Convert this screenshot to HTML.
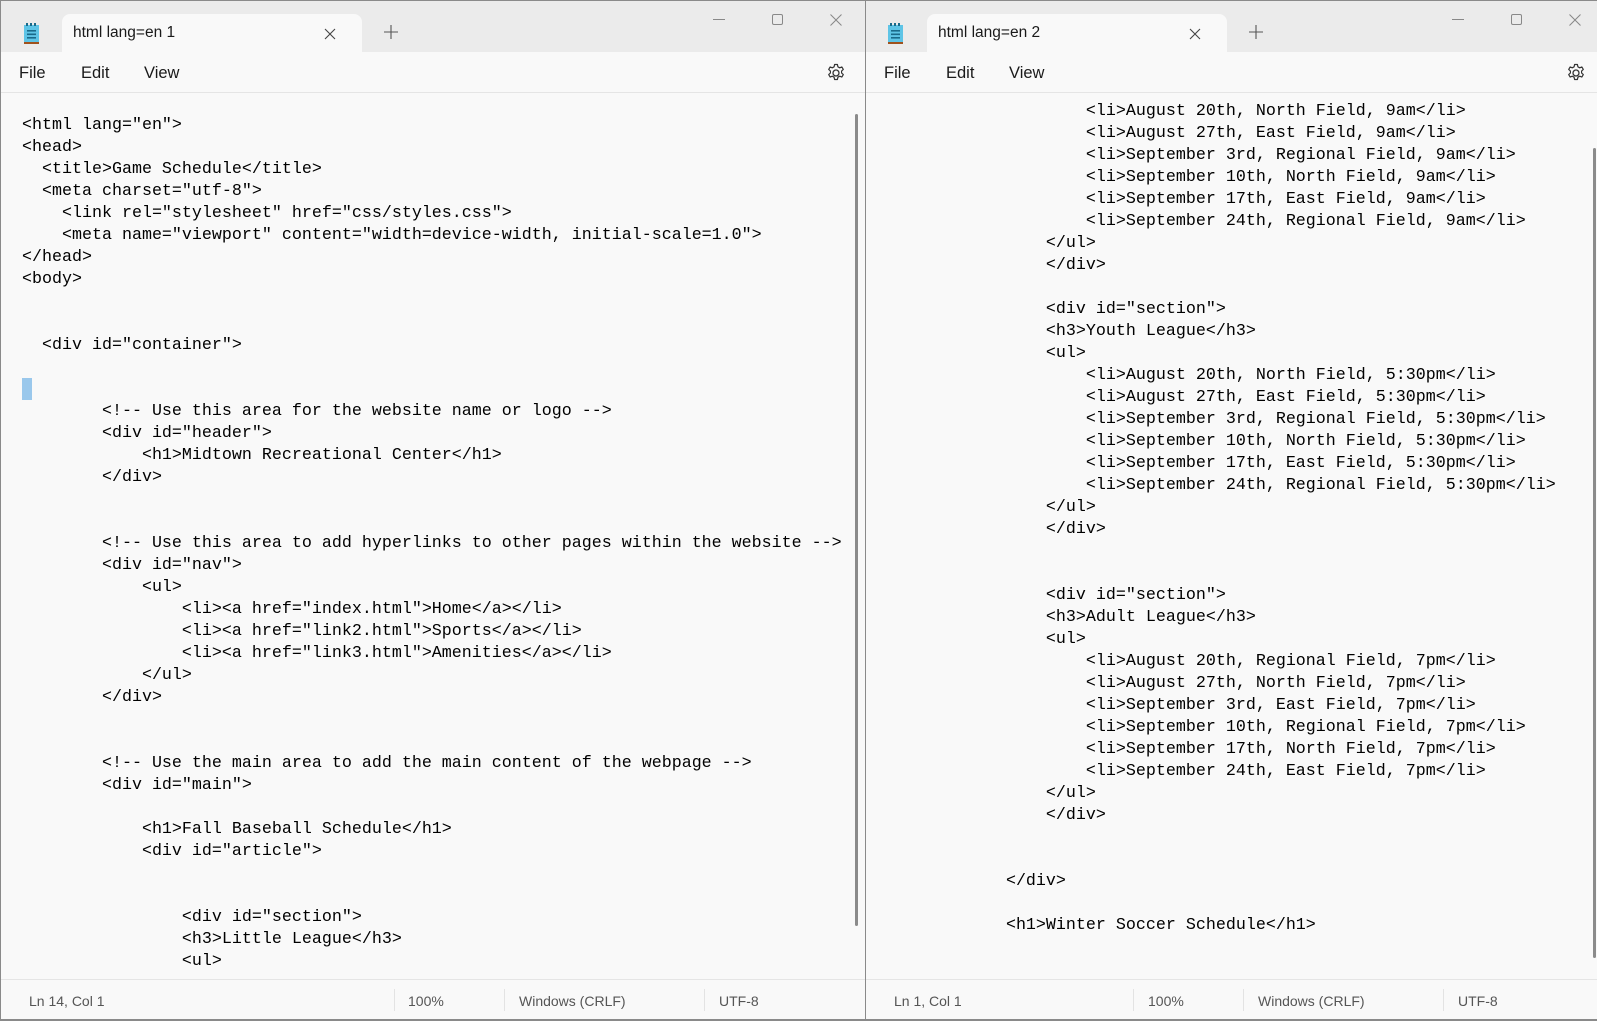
<!DOCTYPE html>
<html><head><meta charset="utf-8">
<style>
*{margin:0;padding:0;box-sizing:border-box}
body{width:1597px;height:1021px;position:relative;background:#f9f9f9;overflow:hidden;font-family:"Liberation Sans",sans-serif}
.win{position:absolute;top:0;height:1021px;background:#f9f9f9;border-top:1px solid #8a8a8a;border-bottom:2px solid #8a8a8a;overflow:hidden}
.tabbar{position:absolute;left:0;top:0;right:0;height:51px;background:#ebebeb}
.tab{position:absolute;left:61px;top:13px;width:300px;height:39px;background:#f9f9f9;border-radius:8px 8px 0 0}
.tab .t{position:absolute;left:11px;top:10px;font-size:15.5px;color:#1a1a1a}
.tab svg{position:absolute;left:262px;top:14px}
.plus{position:absolute;left:383px;top:24px}
.icon{position:absolute;left:23px;top:21px;width:16px;height:22px}
.menu{position:absolute;top:51px;left:0;right:0;height:41px;border-bottom:1px solid #e5e5e5}
.menu span{position:absolute;top:12px;font-size:16.5px;color:#1a1a1a}
.ctrl{position:absolute;top:13px}
.code{position:absolute;font-family:"Liberation Mono",monospace;font-size:16.67px;line-height:22px;white-space:pre;color:#000}
.sb{position:absolute;width:3px;background:#8b8b8b;border-radius:2px}
.status{position:absolute;left:0;right:0;top:978px;height:41px;border-top:1px solid #e5e5e5;font-size:14px;color:#555}
.status span{position:absolute;top:13px}
.status i{position:absolute;top:9px;width:1px;height:22px;background:#e3e3e3}
</style></head><body>

<div class="win" style="left:0;width:866px;border-left:1px solid #8a8a8a;border-right:1px solid #8a8a8a">
 <div class="tabbar"></div>
 <svg class="icon" viewBox="0 0 16 22"><rect x="0" y="3" width="15" height="17" fill="#5ec4e6"/><rect x="2" y="1" width="2" height="3" fill="#1a6a8a"/><rect x="6" y="1" width="2" height="3" fill="#1a6a8a"/><rect x="10" y="1" width="2" height="3" fill="#1a6a8a"/><rect x="3" y="8" width="9" height="1.6" fill="#1a6a8a"/><rect x="3" y="11.5" width="9" height="1.6" fill="#1a6a8a"/><rect x="3" y="15" width="9" height="1.6" fill="#1a6a8a"/><rect x="0" y="20" width="15" height="2" fill="#a0521d"/></svg>
 <div class="tab"><span class="t">html lang=en 1</span><svg width="12" height="12"><path d="M1 1L11 11M11 1L1 11" stroke="#444" stroke-width="1.1"/></svg></div>
 <svg class="plus" width="14" height="14"><path d="M7 0V14M0 7H14" stroke="#555" stroke-width="1.1"/></svg>
 <svg class="ctrl" style="left:712px;top:18px" width="12" height="2"><path d="M0 .5H12" stroke="#888"/></svg>
 <svg class="ctrl" style="left:771px" width="11" height="11"><rect x=".5" y=".5" width="10" height="10" rx="1.5" fill="none" stroke="#888"/></svg>
 <svg class="ctrl" style="left:829px" width="12" height="12"><path d="M.5 .5L11.5 11.5M11.5 .5L.5 11.5" stroke="#888"/></svg>
 <div class="menu"><span style="left:18px">File</span><span style="left:80px">Edit</span><span style="left:143px">View</span>
  <svg style="position:absolute;left:825px;top:11px" width="20" height="20" viewBox="0 0 20 20"><circle cx="10" cy="10" r="3" fill="none" stroke="#333" stroke-width="1.3"/><path d="M8.6 1.5h2.8l.5 2.3 1.8 1 2.2-.8 1.4 2.4-1.7 1.6v2l1.7 1.6-1.4 2.4-2.2-.8-1.8 1-.5 2.3H8.6l-.5-2.3-1.8-1-2.2.8-1.4-2.4 1.7-1.6v-2L2.7 6.4l1.4-2.4 2.2.8 1.8-1z" fill="none" stroke="#333" stroke-width="1.2" stroke-linejoin="round"/></svg></div>
 <div style="position:absolute;left:21px;top:377px;width:10px;height:22px;background:#9ac8ec"></div>
 <div class="code" style="left:21px;top:114px">&lt;html lang="en"&gt;
&lt;head&gt;
  &lt;title&gt;Game Schedule&lt;/title&gt;
  &lt;meta charset="utf-8"&gt;
    &lt;link rel="stylesheet" href="css/styles.css"&gt;
    &lt;meta name="viewport" content="width=device-width, initial-scale=1.0"&gt;
&lt;/head&gt;
&lt;body&gt;


  &lt;div id="container"&gt;


        &lt;!-- Use this area for the website name or logo --&gt;
        &lt;div id="header"&gt;
            &lt;h1&gt;Midtown Recreational Center&lt;/h1&gt;
        &lt;/div&gt;


        &lt;!-- Use this area to add hyperlinks to other pages within the website --&gt;
        &lt;div id="nav"&gt;
            &lt;ul&gt;
                &lt;li&gt;&lt;a href="index.html"&gt;Home&lt;/a&gt;&lt;/li&gt;
                &lt;li&gt;&lt;a href="link2.html"&gt;Sports&lt;/a&gt;&lt;/li&gt;
                &lt;li&gt;&lt;a href="link3.html"&gt;Amenities&lt;/a&gt;&lt;/li&gt;
            &lt;/ul&gt;
        &lt;/div&gt;


        &lt;!-- Use the main area to add the main content of the webpage --&gt;
        &lt;div id="main"&gt;

            &lt;h1&gt;Fall Baseball Schedule&lt;/h1&gt;
            &lt;div id="article"&gt;


                &lt;div id="section"&gt;
                &lt;h3&gt;Little League&lt;/h3&gt;
                &lt;ul&gt;</div>
 <div class="sb" style="left:854px;top:113px;height:812px"></div>
 <div class="status"><span style="left:28px">Ln 14, Col 1</span><i style="left:393px"></i><span style="left:407px">100%</span><i style="left:503px"></i><span style="left:518px">Windows (CRLF)</span><i style="left:703px"></i><span style="left:718px">UTF-8</span></div>
</div>

<div class="win" style="left:866px;width:731px">
 <div class="tabbar"></div>
 <svg class="icon" viewBox="0 0 16 22" style="left:22px"><rect x="0" y="3" width="15" height="17" fill="#5ec4e6"/><rect x="2" y="1" width="2" height="3" fill="#1a6a8a"/><rect x="6" y="1" width="2" height="3" fill="#1a6a8a"/><rect x="10" y="1" width="2" height="3" fill="#1a6a8a"/><rect x="3" y="8" width="9" height="1.6" fill="#1a6a8a"/><rect x="3" y="11.5" width="9" height="1.6" fill="#1a6a8a"/><rect x="3" y="15" width="9" height="1.6" fill="#1a6a8a"/><rect x="0" y="20" width="15" height="2" fill="#a0521d"/></svg>
 <div class="tab"><span class="t">html lang=en 2</span><svg width="12" height="12"><path d="M1 1L11 11M11 1L1 11" stroke="#444" stroke-width="1.1"/></svg></div>
 <svg class="plus" width="14" height="14"><path d="M7 0V14M0 7H14" stroke="#555" stroke-width="1.1"/></svg>
 <svg class="ctrl" style="left:586px;top:18px" width="12" height="2"><path d="M0 .5H12" stroke="#888"/></svg>
 <svg class="ctrl" style="left:645px" width="11" height="11"><rect x=".5" y=".5" width="10" height="10" rx="1.5" fill="none" stroke="#888"/></svg>
 <svg class="ctrl" style="left:703px" width="12" height="12"><path d="M.5 .5L11.5 11.5M11.5 .5L.5 11.5" stroke="#888"/></svg>
 <div class="menu"><span style="left:18px">File</span><span style="left:80px">Edit</span><span style="left:143px">View</span>
  <svg style="position:absolute;left:700px;top:11px" width="20" height="20" viewBox="0 0 20 20"><circle cx="10" cy="10" r="3" fill="none" stroke="#333" stroke-width="1.3"/><path d="M8.6 1.5h2.8l.5 2.3 1.8 1 2.2-.8 1.4 2.4-1.7 1.6v2l1.7 1.6-1.4 2.4-2.2-.8-1.8 1-.5 2.3H8.6l-.5-2.3-1.8-1-2.2.8-1.4-2.4 1.7-1.6v-2L2.7 6.4l1.4-2.4 2.2.8 1.8-1z" fill="none" stroke="#333" stroke-width="1.2" stroke-linejoin="round"/></svg></div>
 <div class="code" style="left:20px;top:100px">                    &lt;li&gt;August 20th, North Field, 9am&lt;/li&gt;
                    &lt;li&gt;August 27th, East Field, 9am&lt;/li&gt;
                    &lt;li&gt;September 3rd, Regional Field, 9am&lt;/li&gt;
                    &lt;li&gt;September 10th, North Field, 9am&lt;/li&gt;
                    &lt;li&gt;September 17th, East Field, 9am&lt;/li&gt;
                    &lt;li&gt;September 24th, Regional Field, 9am&lt;/li&gt;
                &lt;/ul&gt;
                &lt;/div&gt;

                &lt;div id="section"&gt;
                &lt;h3&gt;Youth League&lt;/h3&gt;
                &lt;ul&gt;
                    &lt;li&gt;August 20th, North Field, 5:30pm&lt;/li&gt;
                    &lt;li&gt;August 27th, East Field, 5:30pm&lt;/li&gt;
                    &lt;li&gt;September 3rd, Regional Field, 5:30pm&lt;/li&gt;
                    &lt;li&gt;September 10th, North Field, 5:30pm&lt;/li&gt;
                    &lt;li&gt;September 17th, East Field, 5:30pm&lt;/li&gt;
                    &lt;li&gt;September 24th, Regional Field, 5:30pm&lt;/li&gt;
                &lt;/ul&gt;
                &lt;/div&gt;


                &lt;div id="section"&gt;
                &lt;h3&gt;Adult League&lt;/h3&gt;
                &lt;ul&gt;
                    &lt;li&gt;August 20th, Regional Field, 7pm&lt;/li&gt;
                    &lt;li&gt;August 27th, North Field, 7pm&lt;/li&gt;
                    &lt;li&gt;September 3rd, East Field, 7pm&lt;/li&gt;
                    &lt;li&gt;September 10th, Regional Field, 7pm&lt;/li&gt;
                    &lt;li&gt;September 17th, North Field, 7pm&lt;/li&gt;
                    &lt;li&gt;September 24th, East Field, 7pm&lt;/li&gt;
                &lt;/ul&gt;
                &lt;/div&gt;


            &lt;/div&gt;

            &lt;h1&gt;Winter Soccer Schedule&lt;/h1&gt;</div>
 <div class="sb" style="left:727px;top:147px;height:810px"></div>
 <div class="status"><span style="left:28px">Ln 1, Col 1</span><i style="left:267px"></i><span style="left:282px">100%</span><i style="left:377px"></i><span style="left:392px">Windows (CRLF)</span><i style="left:577px"></i><span style="left:592px">UTF-8</span></div>
</div>
</body></html>
